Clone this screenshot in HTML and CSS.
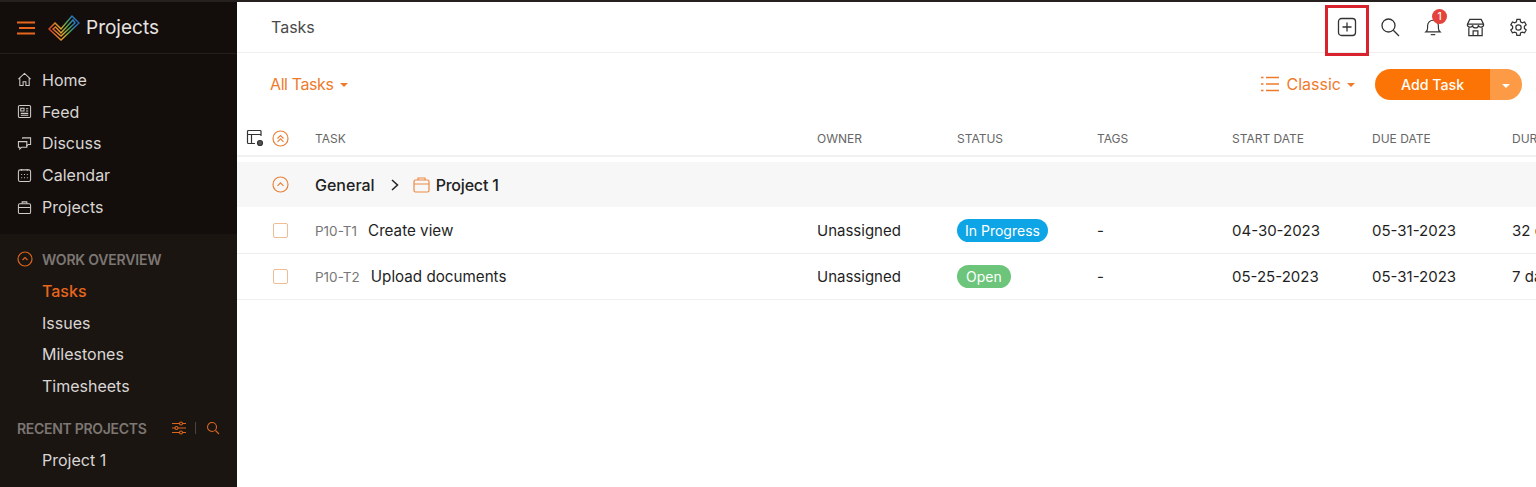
FILE: index.html
```html
<!DOCTYPE html>
<html lang="en">
<head>
  <meta charset="UTF-8">
  <title>Tasks</title>
  <link rel="stylesheet" href="styles.css">
</head>
<body>
  <div class="app">
    <aside class="sidebar">
      <div class="brand">
        <svg class="menu-icon" width="18" height="14" viewBox="0 0 18 14"><path d="M0 1.500h18M2 7h16M0 12.500h18" stroke="#e8651c" stroke-width="2.200"/></svg>
        <svg class="logo" width="32" height="27" viewBox="0 0 32 27" fill="none" stroke="url(#logoGrad)" stroke-width="1.500">
          <defs>
            <linearGradient id="logoGrad" gradientUnits="userSpaceOnUse" x1="1" y1="15" x2="31" y2="6">
              <stop offset="0" stop-color="#d8432a"/>
              <stop offset="0.35" stop-color="#e6a52a"/>
              <stop offset="0.6" stop-color="#4fa84f"/>
              <stop offset="0.8" stop-color="#2a7fb8"/>
              <stop offset="1" stop-color="#2a62b5"/>
            </linearGradient>
          </defs>
          <path d="M1 15l6-6 6 6L24 2l7 7-18 17z"/>
          <path d="M5 15l2.500-2 5.500 6L25 6l2 3-14 13z"/>
        </svg>
        <span class="brand-name">Projects</span>
      </div>
      <nav class="main-nav">
        <a class="nav-item">
          <svg class="nav-icon" viewBox="0 0 16 16"><path d="M1.500 7.500L8 1.500l6.500 6M3 6.500v8h3.500v-4h3v4H13v-8"/></svg>
          Home
        </a>
        <a class="nav-item">
          <svg class="nav-icon" viewBox="0 0 16 16"><rect x="1.500" y="1.500" width="13" height="13" rx="1.500"/><path d="M4 4.500h3.500v3H4zM4 10h8M4 12h8M9.500 5h2.500M9.500 7.500h2.500"/></svg>
          Feed
        </a>
        <a class="nav-item">
          <svg class="nav-icon" viewBox="0 0 16 16"><path d="M6 3V2h8.500v7H12l-1.500 1.500V9"/><path d="M1.500 6h9v6H5l-2 2v-2H1.500z"/></svg>
          Discuss
        </a>
        <a class="nav-item">
          <svg class="nav-icon" viewBox="0 0 16 16"><rect x="1.500" y="2" width="13" height="12.500" rx="2"/><path d="M5 1v2M11 1v2M4.500 7h1M7.500 7h1M10.500 7h1M4.500 10.500h1M7.500 10.500h1M10.500 10.500h1"/></svg>
          Calendar
        </a>
        <a class="nav-item">
          <svg class="nav-icon" viewBox="0 0 16 16"><rect x="1.500" y="4" width="13" height="10.500" rx="1.500"/><path d="M5.500 4V2h5v2M1.500 8h13M7 8h2"/></svg>
          Projects
        </a>
      </nav>
      <div class="side-lower">
        <div class="section-title">
          <svg class="section-toggle" width="16" height="16" viewBox="0 0 16 16"><circle cx="8" cy="8" r="7"/><path d="M5.500 9L8 6.500 10.500 9"/></svg>
          WORK OVERVIEW
        </div>
        <a class="sub-item sub-active">Tasks</a>
        <a class="sub-item">Issues</a>
        <a class="sub-item">Milestones</a>
        <a class="sub-item">Timesheets</a>
        <div class="recent-title">
          <span>RECENT PROJECTS</span>
          <svg class="recent-icon" width="14" height="14" viewBox="0 0 14 14"><path d="M0 2.500h14M0 7h14M0 11.500h14"/><circle cx="9" cy="2.500" r="1.500" fill="#1b1512"/><circle cx="4.500" cy="7" r="1.500" fill="#1b1512"/><circle cx="9" cy="11.500" r="1.500" fill="#1b1512"/></svg>
          <i class="recent-sep"></i>
          <svg class="recent-icon" width="14" height="14" viewBox="0 0 14 14"><circle cx="6" cy="6" r="4.500"/><path d="M9.500 9.500L13 13"/></svg>
        </div>
        <a class="sub-item">Project 1</a>
      </div>
    </aside>

    <main class="content">
      <header class="topbar">
        <h1 class="page-title">Tasks</h1>
        <div class="top-actions">
          <span class="action action-marked">
            <svg width="20" height="20" viewBox="0 0 20 20"><rect x="1.500" y="1.500" width="17" height="17" rx="3"/><path d="M10 5.500v9M5.500 10h9"/></svg>
          </span>
          <span class="action">
            <svg width="20" height="20" viewBox="0 0 20 20"><circle cx="8.500" cy="8.500" r="6.500"/><path d="M13.300 13.300L19 19"/></svg>
          </span>
          <span class="action action-bell">
            <svg width="18" height="18" viewBox="0 0 20 20"><path d="M2 15.500c1.500-1.300 2-2.500 2-4.500V8.500a6 6 0 0 1 12 0V11c0 2 .5 3.200 2 4.500z"/><path d="M7.500 18.500h5"/></svg>
            <b class="badge">1</b>
          </span>
          <span class="action">
            <svg width="19" height="19" viewBox="0 0 20 20"><path d="M4 1.500h12l2.500 5a2.800 2.800 0 0 1-5.500 1 3 3 0 0 1-6 0 2.800 2.800 0 0 1-5.500-1zM3 9.500v9h14v-9M7.500 18.500v-5h5v5M1.500 6.500h17"/></svg>
          </span>
          <span class="action">
            <svg width="19" height="19" viewBox="0 0 20 20"><path d="M8.300 1.500h3.400l.5 2.500 1.800 1 2.400-.8 1.700 3-1.900 1.600v2.200l1.900 1.600-1.700 3-2.400-.8-1.800 1-.5 2.500H8.300l-.5-2.500-1.800-1-2.400.8-1.700-3 1.900-1.600V8.800L1.900 7.200l1.700-3 2.400.8 1.800-1z"/><circle cx="10" cy="10" r="2.800"/></svg>
          </span>
        </div>
      </header>

      <div class="toolbar">
        <span class="view-picker">All Tasks <i class="caret"></i></span>
        <div class="toolbar-right">
          <span class="layout-picker">
            <svg width="18" height="18" viewBox="0 0 18 18"><path d="M5 2.500h13M5 9h13M5 15.500h13M0 2.500h2.500M0 9h2.500M0 15.500h2.500"/></svg>
            Classic <i class="caret"></i>
          </span>
          <div class="add-btn">
            <span class="add-main">Add Task</span>
            <span class="add-more"><i class="caret caret-white"></i></span>
          </div>
        </div>
      </div>

      <div class="task-table">
        <div class="row head-row">
          <div class="cell-lead">
            <svg class="col-icon" width="18" height="18" viewBox="0 0 18 18"><path d="M15 7V2.500A1 1 0 0 0 14 1.500H2.500A1 1 0 0 0 1.500 2.500v11a1 1 0 0 0 1 1H9M1.500 5.500H15M5.500 5.500v9"/><circle cx="14" cy="14" r="2.500" fill="#555"/></svg>
            <svg class="orange-circle" width="17" height="17" viewBox="0 0 17 17"><circle cx="8.500" cy="8.500" r="7.500"/><path d="M5.500 8.500l3-3 3 3M5.500 11.800l3-3 3 3"/></svg>
          </div>
          <div>TASK</div><div>OWNER</div><div>STATUS</div><div>TAGS</div><div>START DATE</div><div>DUE DATE</div><div>DURATION</div>
        </div>

        <div class="group-row">
          <svg class="orange-circle group-toggle" width="17" height="17" viewBox="0 0 17 17"><circle cx="8.500" cy="8.500" r="7.500"/><path d="M5.500 9.800l3-3 3 3"/></svg>
          <span class="group-name">General</span>
          <svg class="crumb-arrow" width="10" height="12" viewBox="0 0 10 12"><path d="M2 1l5.500 5L2 11"/></svg>
          <svg class="case-icon" width="17" height="16" viewBox="0 0 17 16"><rect x="1" y="3" width="15" height="12" rx="1.500"/><path d="M5 3V1h7v2M1 7h15M7.500 7h2"/></svg>
          <span class="group-name group-project">Project 1</span>
        </div>

        <div class="row task-row">
          <div class="cell-lead"><i class="check"></i></div>
          <div class="task-cell"><span class="task-id">P10-T1</span><span>Create view</span></div>
          <div>Unassigned</div>
          <div><span class="status status-progress">In Progress</span></div>
          <div>-</div>
          <div>04-30-2023</div>
          <div>05-31-2023</div>
          <div>32 days</div>
        </div>
        <div class="row task-row">
          <div class="cell-lead"><i class="check"></i></div>
          <div class="task-cell"><span class="task-id">P10-T2</span><span>Upload documents</span></div>
          <div>Unassigned</div>
          <div><span class="status status-open">Open</span></div>
          <div>-</div>
          <div>05-25-2023</div>
          <div>05-31-2023</div>
          <div>7 days</div>
        </div>
      </div>
    </main>
  </div>
</body>
</html>
```

FILE: styles.css
```css
* {
  box-sizing: border-box;
}

html,
body {
  margin: 0;
  height: 100%;
  overflow: hidden;
}

body {
  font-family: 'Inter', 'Liberation Sans', sans-serif;
  background: #fff;
  color: #1f1f1f;
}

.app {
  display: flex;
  height: 487px;
  border-top: 2px solid #26211f;
}

/* sidebar */
.sidebar {
  width: 237px;
  flex: none;
  display: flex;
  flex-direction: column;
  background: #130e0c;
  color: #d9d6d3;
}

.brand {
  display: flex;
  align-items: center;
  height: 52px;
  padding-left: 17px;
  border-bottom: 1px solid #241f1d;
}

.menu-icon {
  margin-right: 13px;
}

.logo {
  margin-right: 6px;
}

.brand-name {
  font-size: 19px;
  color: #e6e3e0;
}

.main-nav {
  display: flex;
  flex-direction: column;
  height: 180px;
  padding-top: 10px;
}

.nav-item {
  display: flex;
  align-items: center;
  height: 31.800px;
  padding-left: 17px;
  font-size: 16px;
}

.nav-icon {
  width: 15px;
  height: 15px;
  margin-right: 10px;
  fill: none;
  stroke: #cfccc9;
  stroke-width: 1.100;
}

.side-lower {
  flex: 1;
  background: #1b1512;
  padding-top: 9px;
}

.section-title {
  display: flex;
  align-items: center;
  height: 32px;
  padding-left: 17px;
  font-size: 14px;
  font-weight: 600;
  letter-spacing: -0.2px;
  color: #7c7773;
}

.section-toggle {
  margin-right: 9px;
  fill: none;
  stroke: #d9651f;
  stroke-width: 1.200;
}

.sub-item {
  display: flex;
  align-items: center;
  height: 31.800px;
  padding-left: 42px;
  font-size: 16px;
}

.sub-active {
  color: #e8651c;
  font-weight: 500;
}

.recent-title {
  display: flex;
  align-items: center;
  height: 32px;
  margin-top: 10px;
  padding-left: 17px;
  font-size: 14px;
  font-weight: 600;
  letter-spacing: -0.3px;
  color: #7c7773;
}

.recent-title span {
  width: 155px;
}

.recent-icon {
  fill: none;
  stroke: #d9651f;
  stroke-width: 1.100;
}

.recent-sep {
  width: 1px;
  height: 12px;
  margin: 0 10px 0 9px;
  background: #4a4340;
}

/* main */
.content {
  flex: 1;
  min-width: 0;
  overflow: hidden;
}

.topbar {
  display: flex;
  align-items: center;
  justify-content: space-between;
  height: 51px;
  padding-left: 34px;
  border-bottom: 1px solid #eeeeee;
}

.page-title {
  margin: 0;
  font-size: 16px;
  font-weight: 400;
  color: #4a4a4a;
}

.top-actions {
  display: flex;
  align-items: center;
  margin-right: -4px;
}

.action {
  position: relative;
  display: flex;
  align-items: center;
  justify-content: center;
  width: 43px;
  height: 51px;
}

.action svg {
  fill: none;
  stroke: #333;
  stroke-width: 1.300;
}

/* red annotation box round the add icon */
.action-marked::after {
  content: "";
  position: absolute;
  box-sizing: border-box;
  top: 3px;
  left: 0;
  width: 44px;
  height: 51px;
  border: 3px solid #d8232f;
}

.badge {
  position: absolute;
  top: 7px;
  left: 21px;
  width: 15px;
  height: 15px;
  border-radius: 50%;
  background: #e6423c;
  color: #fff;
  font-size: 10px;
  font-weight: 500;
  line-height: 15px;
  text-align: center;
}

.toolbar {
  display: flex;
  align-items: center;
  justify-content: space-between;
  height: 63px;
  padding: 0 14px 0 33px;
}

.view-picker,
.layout-picker {
  display: flex;
  align-items: center;
  padding-bottom: 2px;
  font-size: 16px;
  color: #ee7b2c;
}

.view-picker {
  letter-spacing: -0.4px;
}

.layout-picker {
  margin-right: 20px;
}

.layout-picker svg {
  margin-right: 8px;
  fill: none;
  stroke: #ee7b2c;
  stroke-width: 1.400;
}

.caret {
  display: inline-block;
  width: 0;
  height: 0;
  margin-left: 6px;
  margin-top: 3px;
  border-left: 4px solid transparent;
  border-right: 4px solid transparent;
  border-top: 4px solid #ee7b2c;
}

.caret-white {
  margin: 2px 0 0;
  border-top-color: #fff;
}

.toolbar-right {
  display: flex;
  align-items: center;
}

.add-btn {
  display: flex;
  height: 31px;
  border-radius: 16px;
  overflow: hidden;
  color: #fff;
  font-size: 14.200px;
  font-weight: 500;
}

.add-main {
  display: flex;
  align-items: center;
  justify-content: center;
  width: 115px;
  background: #fb7405;
}

.add-more {
  display: flex;
  align-items: center;
  justify-content: center;
  width: 32px;
  background: #fd9a46;
}

.task-table {
  font-size: 15px;
}

.row {
  display: grid;
  grid-template-columns: 78px 502px 140px 140px 135px 140px 140px 140px;
  align-items: center;
}

.head-row {
  height: 41px;
  padding-top: 5px;
  border-bottom: 2px solid #f1f1f1;
  font-size: 12px;
  color: #666;
}

.cell-lead {
  display: flex;
  align-items: center;
  padding-left: 9px;
}

.col-icon {
  margin-right: 8px;
  fill: none;
  stroke: #333;
  stroke-width: 1.200;
}

.orange-circle {
  fill: none;
  stroke: #e8813a;
  stroke-width: 1.200;
}

.group-row {
  display: flex;
  align-items: center;
  height: 45px;
  margin-top: 5px;
  padding-left: 35px;
  background: #f7f7f7;
  font-size: 16px;
}

.group-toggle {
  margin-right: 26px;
}

.group-name {
  font-weight: 500;
  color: #222;
}

.group-project {
  letter-spacing: -0.2px;
}

.crumb-arrow {
  margin: 0 13px 0 15px;
  fill: none;
  stroke: #222;
  stroke-width: 1.500;
}

.case-icon {
  margin-right: 6px;
  fill: none;
  stroke: #ee8a45;
  stroke-width: 1.200;
}

.task-row {
  height: 46.500px;
  border-bottom: 1px solid #eeeeee;
}

.group-row + .task-row {
  padding-top: 1px;
}

.task-row .cell-lead {
  padding-left: 36px;
}

.check {
  width: 15px;
  height: 15px;
  border: 1px solid #eebd94;
  border-radius: 2px;
}

.task-cell {
  display: flex;
  align-items: baseline;
  gap: 11px;
  font-size: 15.200px;
}

.task-id {
  font-size: 13.500px;
  color: #777;
}

.status {
  display: inline-block;
  height: 23px;
  padding: 0 9px;
  border-radius: 12px;
  color: #fff;
  font-size: 14px;
  line-height: 23px;
}

.status-progress {
  padding: 0 8px;
  background: #0ea5e6;
}

.status-open {
  background: #6cc57a;
}
```
